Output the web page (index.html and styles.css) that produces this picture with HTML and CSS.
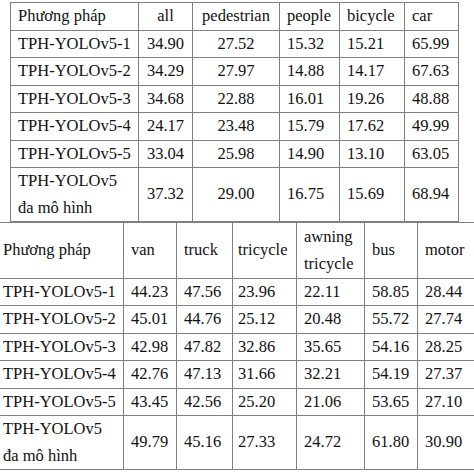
FILE: index.html
```html
<!DOCTYPE html>
<html lang="vi">
<head>
<meta charset="utf-8">
<title>Bảng kết quả</title>
<link rel="stylesheet" href="styles.css">
</head>
<body>
<table class="grid top">
  <colgroup>
    <col class="t1"><col class="t2"><col class="t3"><col class="t4"><col class="t5"><col class="t6">
  </colgroup>
  <tr><td>Phương pháp</td><td class="ctr">all</td><td class="ctr">pedestrian</td><td>people</td><td>bicycle</td><td>car</td></tr>
  <tr><td>TPH-YOLOv5-1</td><td class="ctr">34.90</td><td class="ctr">27.52</td><td>15.32</td><td>15.21</td><td>65.99</td></tr>
  <tr><td>TPH-YOLOv5-2</td><td class="ctr">34.29</td><td class="ctr">27.97</td><td>14.88</td><td>14.17</td><td>67.63</td></tr>
  <tr><td>TPH-YOLOv5-3</td><td class="ctr">34.68</td><td class="ctr">22.88</td><td>16.01</td><td>19.26</td><td>48.88</td></tr>
  <tr><td>TPH-YOLOv5-4</td><td class="ctr">24.17</td><td class="ctr">23.48</td><td>15.79</td><td>17.62</td><td>49.99</td></tr>
  <tr><td>TPH-YOLOv5-5</td><td class="ctr">33.04</td><td class="ctr">25.98</td><td>14.90</td><td>13.10</td><td>63.05</td></tr>
  <tr><td>TPH-YOLOv5<br>đa mô hình</td><td class="ctr">37.32</td><td class="ctr">29.00</td><td>16.75</td><td>15.69</td><td>68.94</td></tr>
</table>
<table class="grid bottom">
  <colgroup>
    <col class="b1"><col class="b2"><col class="b3"><col class="b4"><col class="b5"><col class="b6"><col class="b7">
  </colgroup>
  <tr class="head"><td>Phương pháp</td><td>van</td><td>truck</td><td class="narrow">tricycle</td><td>awning<br>tricycle</td><td>bus</td><td>motor</td></tr>
  <tr><td>TPH-YOLOv5-1</td><td>44.23</td><td>47.56</td><td class="narrow">23.96</td><td>22.11</td><td>58.85</td><td>28.44</td></tr>
  <tr><td>TPH-YOLOv5-2</td><td>45.01</td><td>44.76</td><td class="narrow">25.12</td><td>20.48</td><td>55.72</td><td>27.74</td></tr>
  <tr><td>TPH-YOLOv5-3</td><td>42.98</td><td>47.82</td><td class="narrow">32.86</td><td>35.65</td><td>54.16</td><td>28.25</td></tr>
  <tr><td>TPH-YOLOv5-4</td><td>42.76</td><td>47.13</td><td class="narrow">31.66</td><td>32.21</td><td>54.19</td><td>27.37</td></tr>
  <tr><td>TPH-YOLOv5-5</td><td>43.45</td><td>42.56</td><td class="narrow">25.20</td><td>21.06</td><td>53.65</td><td>27.10</td></tr>
  <tr><td>TPH-YOLOv5<br>đa mô hình</td><td>49.79</td><td>45.16</td><td class="narrow">27.33</td><td>24.72</td><td>61.80</td><td>30.90</td></tr>
</table>
</body>
</html>
```
FILE: styles.css
```css
html, body {
  margin: 0;
  padding: 0;
  background: #ffffff;
  overflow: hidden;
}

body {
  font-family: "Liberation Serif", serif;
  font-size: 16.5px;
  color: #111111;
}

.grid {
  border-collapse: separate;
  border-spacing: 0;
  table-layout: fixed;
  border-top: 1px solid #808080;
  border-left: 1px solid #808080;
}

.grid td {
  font-family: "Liberation Serif", serif;
  font-size: 16.5px;
  border-right: 1px solid #808080;
  border-bottom: 1px solid #808080;
  padding: 0 0 0 7px;
  line-height: 26.5px;
  white-space: nowrap;
  vertical-align: middle;
  text-align: left;
  overflow: hidden;
}

.grid td.ctr {
  text-align: center;
  padding: 0;
}

.grid td.narrow {
  padding-left: 5px;
}

.top {
  margin: 2px 0 0 10px;
  width: 449px;
}

.t1 { width: 128px; }
.t2 { width: 54px; }
.t3 { width: 87px; }
.t4 { width: 60px; }
.t5 { width: 65px; }
.t6 { width: 54px; }

.bottom {
  margin: 0 0 0 -5px;
  width: 480px;
}

.bottom .head td {
  padding-top: 1px;
  padding-bottom: 0.5px;
}

.b1 { width: 128px; }
.b2 { width: 53px; }
.b3 { width: 56px; }
.b4 { width: 64px; }
.b5 { width: 68px; }
.b6 { width: 53px; }
.b7 { width: 57px; }
```
